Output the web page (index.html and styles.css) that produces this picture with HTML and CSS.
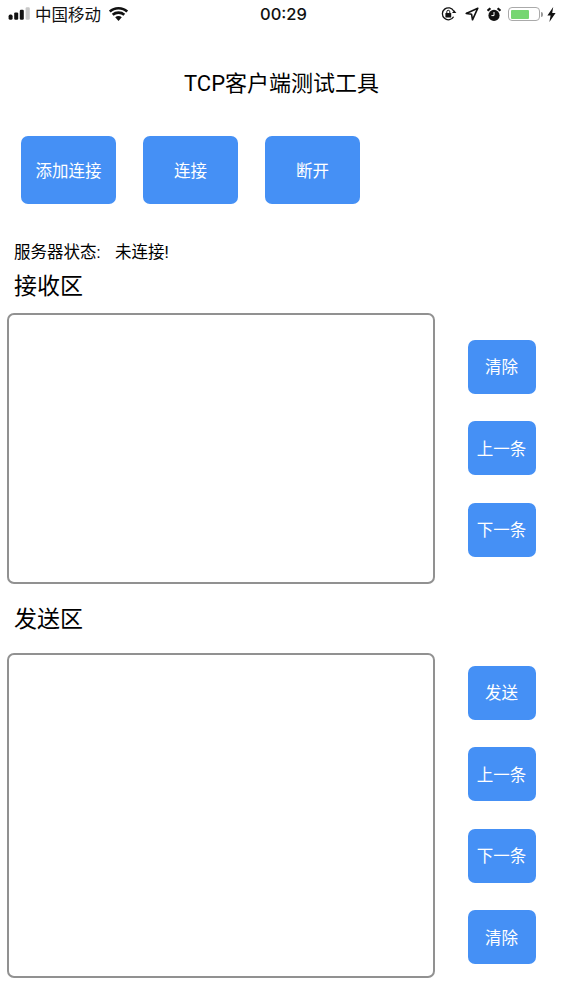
FILE: index.html
```html
<!DOCTYPE html>
<html lang="zh">
<head>
<meta charset="utf-8">
<title>TCP客户端测试工具</title>
<link rel="stylesheet" href="styles.css">
</head>
<body>
<div class="status">
  <div class="status-left">
    <svg class="signal" width="23" height="14" viewBox="0 0 23 14"><rect x="0.6" y="7.6" width="4" height="5.2" rx="1.6" fill="#111"/><rect x="6.2" y="5.4" width="4" height="7.4" rx="1.2" fill="#111"/><rect x="11.8" y="2.8" width="4" height="10" rx="1.2" fill="#111"/><rect x="17.6" y="0.2" width="4.2" height="12.6" rx="1.2" fill="#c8c8c8"/></svg>
    <span class="carrier">中国移动</span>
    <svg class="wifi" width="19" height="14" viewBox="0 0 19 14"><path d="M.8 4.6C5.4.2 13.6.2 18.2 4.6" fill="none" stroke="#111" stroke-width="2.6"/><path d="M3.7 7.8c3.3-2.9 8.3-2.9 11.6 0" fill="none" stroke="#111" stroke-width="2.6"/><path d="M6.2 10.2c1.9-1.6 4.7-1.6 6.6 0L9.5 14z" fill="#111"/></svg>
  </div>
  <div class="time">00:29</div>
  <div class="status-right">
    <svg class="i-lock" width="16" height="14" viewBox="0 0 16 14"><path d="M12.6 9.8A6 6 0 1 1 12.7 4" fill="none" stroke="#111" stroke-width="1.3"/><path d="M11 6h4.4l-2.2-2.8z" fill="#111"/><rect x="4.4" y="6" width="5.8" height="4.6" rx=".6" fill="#111"/><path d="M5.8 6V4.8a1.5 1.5 0 0 1 3 0V6" fill="none" stroke="#111"/></svg>
    <svg class="i-loc" width="14" height="14" viewBox="0 0 14 14"><path d="M12.8 1.2 1.2 6.4l5.4.9.9 5.5z" fill="none" stroke="#111" stroke-width="1.6" stroke-linejoin="round"/></svg>
    <svg class="i-alarm" width="14" height="15" viewBox="0 0 14 15"><circle cx="7" cy="8.4" r="5.6" fill="#111"/><path d="M7 5v3.6H4.4" fill="none" stroke="#fff" stroke-width="1"/><path d="M.6 3.8 3.4 1.2M13.4 3.8 10.6 1.2" stroke="#111" stroke-width="2.2"/></svg>
    <div class="battery"><div class="battery-level"></div></div>
    <div class="battery-tip"></div>
    <svg class="i-bolt" width="9" height="15" viewBox="0 0 9 15"><path d="M6.2 0 .4 8.4h3.2L2.4 15l6.2-9H5.2z" fill="#111"/></svg>
  </div>
</div>

<h1 class="title">TCP客户端测试工具</h1>

<div class="actions">
  <button class="btn btn-top">添加连接</button>
  <button class="btn btn-top">连接</button>
  <button class="btn btn-top">断开</button>
</div>

<div class="state"><span>服务器状态:</span><span>未连接!</span></div>

<h2 class="label label-recv">接收区</h2>
<section class="zone zone-recv">
  <div class="box"></div>
  <div class="side">
    <button class="btn btn-side">清除</button>
    <button class="btn btn-side">上一条</button>
    <button class="btn btn-side">下一条</button>
  </div>
</section>

<h2 class="label label-send">发送区</h2>
<section class="zone zone-send">
  <div class="box"></div>
  <div class="side">
    <button class="btn btn-side">发送</button>
    <button class="btn btn-side">上一条</button>
    <button class="btn btn-side">下一条</button>
    <button class="btn btn-side">清除</button>
  </div>
</section>
</body>
</html>
```
FILE: styles.css
```css
* { box-sizing: border-box; }
html, body { margin: 0; padding: 0; }
body {
  width: 563px;
  height: 1000px;
  overflow: hidden;
  background: #fff;
  color: #000;
  font-family: Roboto, "Noto Sans CJK SC", sans-serif;
}
.status {
  height: 28px;
  display: grid;
  grid-template-columns: 1fr auto 1fr;
  align-items: center;
  padding: 0 7px 0 8px;
}
.status-left, .status-right { display: flex; align-items: center; }
.status-right { justify-content: flex-end; }
.carrier { font-size: 16.5px; margin-left: 4px; color: #111; }
.wifi { margin-left: 8px; }
.time {
  font: 500 16.5px "Inter", "Liberation Sans", sans-serif;
  color: #111;
  margin-left: 3px;
}
.i-loc { margin-left: 8px; }
.i-alarm { margin-left: 8px; }
.battery {
  width: 32px;
  height: 14px;
  margin-left: 7px;
  border: 1.5px solid #aaa;
  border-radius: 4px;
  padding: 1.5px;
}
.battery-level { width: 18px; height: 100%; background: #76d672; border-radius: 1px; }
.battery-tip { width: 2px; height: 5px; margin-left: 1px; background: #999; border-radius: 0 2px 2px 0; }
.i-bolt { margin-left: 4px; }
.title {
  margin: 39px 0 0;
  height: 32px;
  padding-top: 1px;
  line-height: 32px;
  text-align: center;
  font-size: 22px;
  font-weight: 400;
}
.actions {
  display: flex;
  gap: 27px;
  margin-top: 37px;
  padding-left: 21px;
}
.btn {
  display: block;
  padding: 0 0 1px;
  border: 0;
  background: #4590f5;
  color: #fff;
  font-family: inherit;
  font-size: 16.5px;
}
.btn-top { width: 95px; height: 68px; border-radius: 7px; }
.state {
  display: flex;
  gap: 14.5px;
  margin-top: 37px;
  padding-top: 1px;
  padding-left: 14px;
  height: 22px;
  line-height: 22px;
  font-size: 16.5px;
}
.label {
  margin: 0;
  height: 30px;
  padding-top: 1px;
  padding-left: 14px;
  font-size: 23px;
  font-weight: 400;
  line-height: 30px;
}
.label-recv { margin-top: 8px; }
.label-send { margin-top: 20px; }
.zone {
  display: flex;
  align-items: flex-start;
  padding-left: 7px;
}
.zone-recv { margin-top: 12px; height: 271px; }
.zone-send { margin-top: 19px; height: 325px; }
.box {
  width: 428px;
  height: 100%;
  border: 2px solid #919191;
  border-radius: 7px;
}
.side {
  display: flex;
  flex-direction: column;
  gap: 27.5px;
  margin-left: 32.5px;
}
.zone-recv .side { padding-top: 26.5px; }
.zone-send .side { padding-top: 12.5px; }
.btn-side { width: 68px; height: 54px; border-radius: 7px; }
```
